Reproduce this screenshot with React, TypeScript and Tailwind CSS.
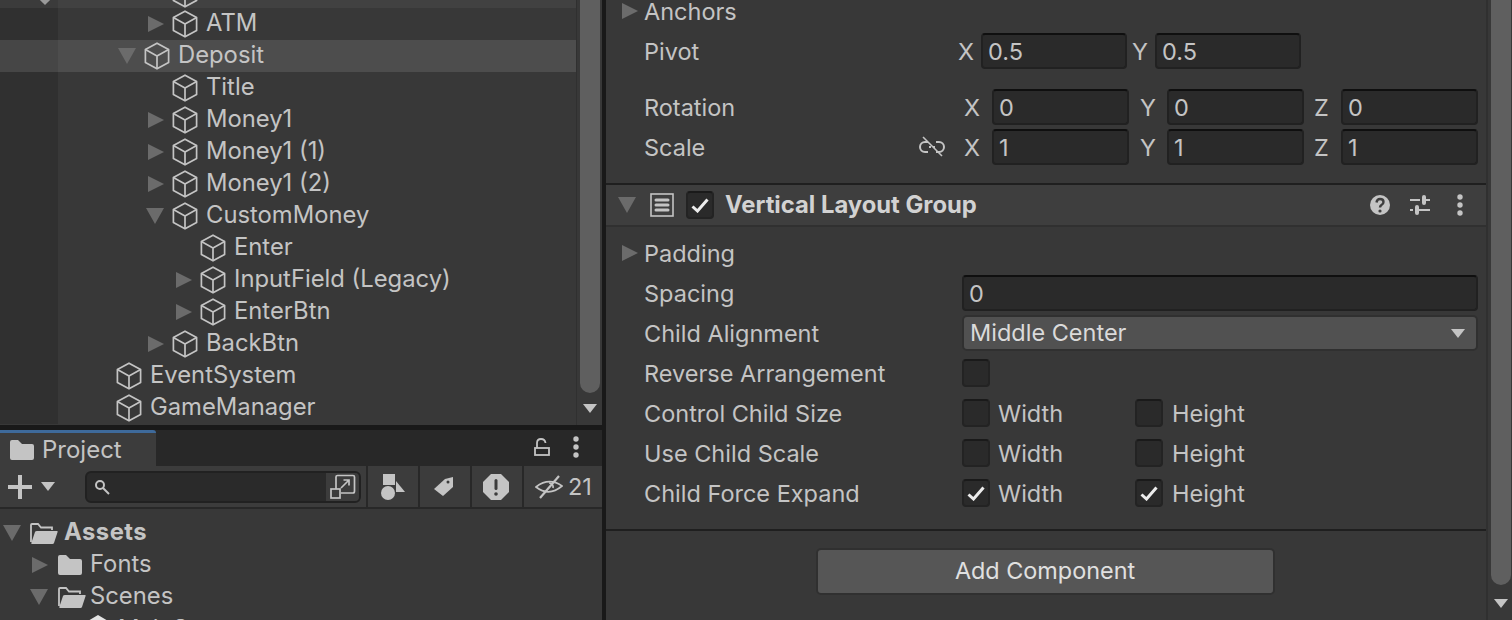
const ICON = "#c4c4c4";

const Cube = () => (
  <svg width="26" height="28" viewBox="0 0 26 28" fill="none" stroke={ICON} strokeWidth="1.7" strokeLinejoin="round" className="shrink-0">
    <path d="M13 1.2 L24.6 7.6 V20.4 L13 26.8 L1.4 20.4 V7.6 Z" />
    <path d="M1.4 7.6 L13 14 L24.6 7.6 M13 14 V26.8" />
  </svg>
);

// foldout triangles
const ArrowRight = ({ color = "#6b6b6b" }: { color?: string }) => (
  <svg width="16" height="16" viewBox="0 0 16 16" className="shrink-0"><path d="M0 0 L16 8 L0 16 Z" fill={color} /></svg>
);
const ArrowDown = ({ color = "#6b6b6b" }: { color?: string }) => (
  <svg width="18" height="16" viewBox="0 0 18 16" className="shrink-0"><path d="M0 0 H18 L9 16 Z" fill={color} /></svg>
);

const Folder = () => (
  <svg width="24" height="20" viewBox="0 0 24 20" className="shrink-0">
    <path d="M0 2 Q0 0 2 0 H8 L12 4 H22 Q24 4 24 6 V18 Q24 20 22 20 H2 Q0 20 0 18 Z" fill={ICON} />
  </svg>
);
const FolderOpen = () => (
  <svg width="28" height="21" viewBox="0 0 28 21" className="shrink-0">
    <path d="M1 19 V2 Q1 1 2 1 H8 L11 4.5 H22 V7" fill="none" stroke={ICON} strokeWidth="1.8" />
    <path d="M7 8 H27 Q28 8 27.6 9 L24 20 Q23.6 21 22.5 21 H2 Q1 21 1.3 20 L5 9 Q5.4 8 7 8 Z" fill={ICON} />
  </svg>
);

type Node = { name: string; depth: number; arrow?: "right" | "down"; selected?: boolean };

const nodes: Node[] = [
  { name: "ATM", depth: 2, arrow: "right" },
  { name: "Deposit", depth: 1, arrow: "down", selected: true },
  { name: "Title", depth: 2 },
  { name: "Money1", depth: 2, arrow: "right" },
  { name: "Money1 (1)", depth: 2, arrow: "right" },
  { name: "Money1 (2)", depth: 2, arrow: "right" },
  { name: "CustomMoney", depth: 2, arrow: "down" },
  { name: "Enter", depth: 3 },
  { name: "InputField (Legacy)", depth: 3, arrow: "right" },
  { name: "EnterBtn", depth: 3, arrow: "right" },
  { name: "BackBtn", depth: 2, arrow: "right" },
  { name: "EventSystem", depth: 0 },
  { name: "GameManager", depth: 0 },
];

const HierarchyRow = ({ node }: { node: Node }) => (
  <div className={`flex h-8 items-center ${node.selected ? "bg-[#4d4d4d]" : ""}`}>
    <div className={`h-full w-[58px] shrink-0 ${node.selected ? "bg-[#464646]" : "bg-[#303030]"}`} />
    <div className="flex h-full items-center" style={{ paddingLeft: 58 + node.depth * 28 }}>
      <div className="flex w-0 -translate-x-[24px] items-center">
        {node.arrow === "right" && <span><ArrowRight /></span>}
        {node.arrow === "down" && <span className="-ml-[2px]"><ArrowDown /></span>}
      </div>
      <Cube />
      <span className="ml-[8px] whitespace-nowrap pb-[2px]">{node.name}</span>
    </div>
  </div>
);

const Hierarchy = () => (
  <div className="flex h-[425px] overflow-hidden bg-[#383838]">
    <div className="w-[576px] shrink-0 overflow-hidden">
      {/* the row scrolled off the top */}
      <div className="flex h-[8px] items-end overflow-hidden bg-[#414141]">
        <div className="relative h-full w-[58px] shrink-0 bg-[#3b3b3b]">
          <div className="absolute -top-[7px] left-[40px] h-[10px] w-[10px] rotate-45 bg-[#9a9a9a]" />
        </div>
        <div className="ml-[114px] shrink-0"><Cube /></div>
      </div>
      {nodes.map((n) => <HierarchyRow key={n.name} node={n} />)}
    </div>
    <div className="flex w-[26px] shrink-0 flex-col items-center border-l border-[#303030] bg-[#383838] pl-[1px]">
      <div className="h-[393px] w-[20px] shrink-0 rounded-b-[10px] bg-[#5f5f5f]" />
      <svg width="14" height="9" viewBox="0 0 14 9" className="mt-[11px] shrink-0"><path d="M0 0 H14 L7 9 Z" fill={ICON} /></svg>
    </div>
  </div>
);

const Sep = () => <div className="h-full w-[2px] shrink-0 bg-[#282828]" />;

const ToolButton = ({ children, w }: { children: React.ReactNode; w: string }) => (
  <div className={`flex h-full items-center justify-center ${w}`}>{children}</div>
);

const Project = () => (
  <div className="flex min-h-0 flex-1 flex-col overflow-hidden">
    <div className="flex h-[36px] shrink-0 bg-[#282828]">
      <div className="flex w-[156px] items-center rounded-tr-[3px] border-t-[3px] border-[#3e6a9b] bg-[#3c3c3c] pl-[10px]">
        <Folder />
        <span className="ml-[8px] pt-[1px] text-[24px] leading-none">Project</span>
      </div>
      <div className="flex-1" />
      <svg width="18" height="20" viewBox="0 0 18 20" fill="none" stroke={ICON} strokeWidth="1.8" className="mt-[7px] shrink-0">
        <rect x="2" y="11" width="14" height="7" />
        <path d="M4 11 V6 Q4 2 8 2 Q12 2 12.5 6" />
      </svg>
      <svg width="6" height="22" viewBox="0 0 6 22" className="ml-[22px] mr-[23px] mt-[6px] shrink-0">
        <circle cx="3" cy="3" r="2.7" fill={ICON} /><circle cx="3" cy="11" r="2.7" fill={ICON} /><circle cx="3" cy="19" r="2.7" fill={ICON} />
      </svg>
    </div>
    <div className="flex h-[43px] shrink-0 items-center border-b-[2px] border-[#282828] bg-[#3c3c3c]">
      <svg width="24" height="24" viewBox="0 0 24 24" className="ml-[8px] shrink-0"><path d="M10 0 H14 V10 H24 V14 H14 V24 H10 V14 H0 V10 H10 Z" fill={ICON} /></svg>
      <svg width="14" height="9" viewBox="0 0 14 9" className="ml-[9px] shrink-0"><path d="M0 0 H14 L7 9 Z" fill={ICON} /></svg>
      <div className="ml-[30px] flex h-[32px] w-[276px] shrink-0 items-center overflow-hidden rounded-[6px] border-[2px] border-[#212121] bg-[#2a2a2a]">
        <svg width="16" height="16" viewBox="0 0 16 16" fill="none" stroke={ICON} strokeWidth="2" className="ml-[7px] shrink-0">
          <circle cx="6" cy="6" r="4" /><path d="M9 9 L15 15" />
        </svg>
        <div className="flex-1" />
        <div className="flex h-full w-[33px] shrink-0 items-center justify-center bg-[#3c3c3c]">
          <svg width="26" height="25" viewBox="0 0 26 25" fill="none" stroke={ICON} strokeWidth="1.7" className="shrink-0">
            <path d="M6 15 V3 Q6 1.5 7.5 1.5 H23 Q24.5 1.5 24.5 3 V17 Q24.5 19 23 19 H11" />
            <rect x="1" y="15" width="9" height="9" />
            <path d="M11 14 L19 6 M13.5 6 H19 V11.5" />
          </svg>
        </div>
      </div>
      <div className="ml-[5px] h-full"><Sep /></div>
      <ToolButton w="w-[50px]">
        <svg width="24" height="26" viewBox="0 0 24 26" className="shrink-0" fill={ICON}>
          <rect x="2" y="0" width="12" height="11" />
          <circle cx="7" cy="19" r="7" />
          <path d="M15 7 L24 18 H15 Z" />
        </svg>
      </ToolButton>
      <Sep />
      <ToolButton w="w-[50px]">
        <svg width="21" height="21" viewBox="0 0 21 21" className="mr-[4px] shrink-0">
          <path d="M20 1 V11 L10 20 L1 13 L12 3 Z" fill={ICON} /><circle cx="15" cy="6" r="1.5" fill="#3c3c3c" />
        </svg>
      </ToolButton>
      <Sep />
      <ToolButton w="w-[50px]">
        <svg width="26" height="26" viewBox="0 0 26 26" className="mr-[2px] shrink-0">
          <path d="M8 0 H18 L26 8 V18 L18 26 H8 L0 18 V8 Z" fill={ICON} />
          <rect x="11.5" y="5" width="3" height="11" rx="1.5" fill="#3c3c3c" /><circle cx="13" cy="20" r="1.8" fill="#3c3c3c" />
        </svg>
      </ToolButton>
      <Sep />
      <div className="flex h-full flex-1 items-center pl-[11px]">
        <svg width="28" height="24" viewBox="0 0 28 24" fill="none" stroke={ICON} strokeWidth="1.7" className="shrink-0">
          <path d="M1 12 Q14 2 27 11 Q14 22 1 12 Z" /><path d="M5 23 L24 1" strokeWidth="2.2" /><path d="M14 8 A4 4 0 0 1 18 13" />
        </svg>
        <span className="ml-[5px] text-[23.5px] leading-none">21</span>
      </div>
    </div>
    <div className="flex-1 bg-[#383838] pt-[8px]">
      <div className="flex h-8 items-center">
        <span className="ml-[3px] w-[27px]"><ArrowDown /></span>
        <FolderOpen />
        <span className="ml-[6px] pb-[2px] font-bold tracking-[0.5px]">Assets</span>
      </div>
      <div className="flex h-8 items-center">
        <span className="ml-[32px] w-[26px]"><ArrowRight /></span>
        <Folder />
        <span className="ml-[8px] pb-[2px]">Fonts</span>
      </div>
      <div className="flex h-8 items-center">
        <span className="ml-[30px] w-[28px]"><ArrowDown /></span>
        <FolderOpen />
        <span className="ml-[4px] pb-[2px]">Scenes</span>
      </div>
      <div className="flex h-8 items-center pl-[85px]">
        <svg width="26" height="28" viewBox="0 0 24 26" className="shrink-0"><path d="M12 0 L23 6.5 V19.5 L12 26 L1 19.5 V6.5 Z" fill="#e4e4e4" /></svg>
        <span className="ml-[7px]">MainScene</span>
      </div>
    </div>
  </div>
);

const Input = ({ value, w }: { value: string; w: string }) => (
  <div className={`flex h-[36px] shrink-0 items-center rounded-[4px] border-[2px] border-[#212121] border-t-[#0f0f0f] bg-[#2a2a2a] pl-[5px] pt-[2px] ${w}`}>
    {value}
  </div>
);

const Label = ({ text, w }: { text: string; w: string }) => <span className={`shrink-0 pt-[2px] ${w}`}>{text}</span>;

const Row = ({ children, className = "" }: { children: React.ReactNode; className?: string }) => (
  <div className={`flex h-10 shrink-0 items-center pl-[38px] text-[23.5px] ${className}`}>{children}</div>
);

const FoldLabel = ({ text }: { text: string }) => (
  <Row className="relative">
    <span className="absolute left-[16px] top-[12px]"><ArrowRight /></span>
    <span className="pt-[2px] leading-[20px]">{text}</span>
  </Row>
);

const Check = ({ on = false }: { on?: boolean }) => (
  <div className="flex h-[28px] w-[28px] shrink-0 items-center justify-center rounded-[4px] border-[2px] border-[#232323] border-t-[#1a1a1a] bg-[#2a2a2a]">
    {on && (
      <svg width="18" height="15" viewBox="0 0 18 15" fill="none" stroke="#ececec" strokeWidth="3"><path d="M1.5 8.5 L6.5 13 L16.5 1.5" /></svg>
    )}
  </div>
);

const TwoChecks = ({ label, on = false }: { label: string; on?: boolean }) => (
  <Row>
    <Label text={label} w="w-[318px]" />
    <Check on={on} />
    <span className="ml-[8px] w-[137px] shrink-0 pt-[2px]">Width</span>
    <Check on={on} />
    <span className="ml-[9px] pt-[2px]">Height</span>
  </Row>
);

const Vec3 = ({ label, a, b, c, icon }: { label: string; a: string; b: string; c: string; icon?: boolean }) => (
  <Row>
    <Label text={label} w={icon ? "w-[275px]" : "w-[320px]"} />
    {icon && (
      <svg width="26" height="22" viewBox="0 0 26 22" fill="none" stroke={ICON} strokeWidth="2" className="mr-[19px] shrink-0">
        <path d="M9 6 H6 A5 5 0 0 0 6 16 H9 M17 6 H20 A5 5 0 0 1 20 16 H17" />
        <path d="M10 11 H16" strokeDasharray="2 2" />
        <path d="M4 1 L23 20" strokeWidth="1.6" />
      </svg>
    )}
    <span className="w-[28px] shrink-0 pt-[2px]">X</span>
    <Input value={a} w="w-[137px]" />
    <span className="ml-[11px] w-[27px] shrink-0 pt-[2px]">Y</span>
    <Input value={b} w="w-[137px]" />
    <span className="ml-[10px] w-[27px] shrink-0 pt-[2px]">Z</span>
    <Input value={c} w="w-[137px]" />
  </Row>
);

const Inspector = () => (
  <div className="flex min-w-0 flex-1 overflow-hidden bg-[#383838]">
    <div className="flex w-[880px] shrink-0 flex-col">
      <div className="-mt-[9px]"><FoldLabel text="Anchors" /></div>
      <Row>
        <Label text="Pivot" w="w-[314px]" />
        <span className="w-[23px] shrink-0 pt-[2px]">X</span>
        <Input value="0.5" w="w-[146px]" />
        <span className="ml-[5px] w-[23px] shrink-0 pt-[2px]">Y</span>
        <Input value="0.5" w="w-[146px]" />
      </Row>
      <div className="mt-[16px]"><Vec3 label="Rotation" a="0" b="0" c="0" /></div>
      <Vec3 label="Scale" a="1" b="1" c="1" icon />

      <div className="mt-[16px] flex h-[44px] shrink-0 items-center border-y-[2px] border-t-[#1f1f1f] border-b-[#303030] bg-[#3e3e3e] pl-[12px] pr-[22px]">
        <span className="w-[32px]"><ArrowDown /></span>
        <svg width="24" height="24" viewBox="0 0 24 24" className="mr-[12px] shrink-0" fill="none" stroke={ICON}>
          <rect x="1" y="1" width="22" height="22" strokeWidth="1.6" />
          <path d="M6 7 H18 M6 12 H18 M6 17 H18" strokeWidth="3" strokeLinecap="round" />
        </svg>
        <Check on />
        <span className="ml-[11px] font-bold text-[#d2d2d2]">Vertical Layout Group</span>
        <div className="flex-1" />
        <svg width="20" height="20" viewBox="0 0 20 20" className="shrink-0">
          <circle cx="10" cy="10" r="10" fill={ICON} />
          <path d="M6.5 7.5 Q7 4 10 4 Q13.5 4 13.5 7 Q13.5 9 11.5 10 Q10 11 10 12.5" fill="none" stroke="#3e3e3e" strokeWidth="2.4" />
          <circle cx="10" cy="16" r="1.6" fill="#3e3e3e" />
        </svg>
        <svg width="20" height="20" viewBox="0 0 20 20" className="ml-[20px] shrink-0" fill={ICON}>
          <rect x="0" y="4" width="10" height="2" /><rect x="12" y="0" width="4" height="10" rx="2" /><rect x="16" y="4" width="4" height="2" />
          <rect x="0" y="14" width="3" height="2" /><rect x="5" y="10" width="4" height="10" rx="2" /><rect x="9" y="14" width="11" height="2" />
        </svg>
        <svg width="8" height="22" viewBox="0 0 8 22" className="ml-[26px] shrink-0" fill={ICON}>
          <circle cx="4" cy="3" r="2.7" /><circle cx="4" cy="11" r="2.7" /><circle cx="4" cy="19" r="2.7" />
        </svg>
      </div>

      <div className="mt-[6px]"><FoldLabel text="Padding" /></div>
      <Row>
        <Label text="Spacing" w="w-[318px]" />
        <Input value="0" w="w-[516px]" />
      </Row>
      <Row>
        <Label text="Child Alignment" w="w-[318px]" />
        <div className="flex h-[36px] w-[516px] shrink-0 items-center justify-between rounded-[5px] border-[2px] border-[#303030] bg-[#515151] pl-[6px] pr-[11px] text-[#dadada]">
          <span>Middle Center</span>
          <svg width="14" height="9" viewBox="0 0 14 9" className="shrink-0"><path d="M0 0 H14 L7 9 Z" fill={ICON} /></svg>
        </div>
      </Row>
      <Row>
        <Label text="Reverse Arrangement" w="w-[318px]" />
        <Check />
      </Row>
      <TwoChecks label="Control Child Size" />
      <TwoChecks label="Use Child Scale" />
      <TwoChecks label="Child Force Expand" on />

      <div className="mt-[16px] h-[2px] shrink-0 bg-[#1f1f1f]" />
      <div className="mt-[17px] flex justify-center">
        <div className="ml-[-2px] flex h-[47px] w-[459px] items-center justify-center rounded-[5px] border-[2px] border-[#303030] bg-[#565656] pb-[2px] text-[23.4px] text-[#e0e0e0]">
          Add Component
        </div>
      </div>
    </div>
    <div className="flex w-[26px] shrink-0 flex-col items-center border-l-[2px] border-[#303030] pl-[1px]">
      <div className="h-[585px] w-[20px] shrink-0 rounded-b-[10px] bg-[#5f5f5f]" />
      <svg width="14" height="9" viewBox="0 0 14 9" className="mt-[14px] shrink-0"><path d="M0 0 H14 L7 9 Z" fill={ICON} /></svg>
    </div>
  </div>
);

export default function App() {
  return (
    <div className="flex h-[620px] w-[1512px] overflow-hidden bg-[#191919] font-['Inter',sans-serif] text-[23.8px] leading-none text-[#c4c4c4]">
      <div className="flex w-[602px] shrink-0 flex-col">
        <Hierarchy />
        <div className="h-[5px] shrink-0 bg-[#191919]" />
        <Project />
      </div>
      <div className="w-[4px] shrink-0 bg-[#191919]" />
      <Inspector />
    </div>
  );
}
